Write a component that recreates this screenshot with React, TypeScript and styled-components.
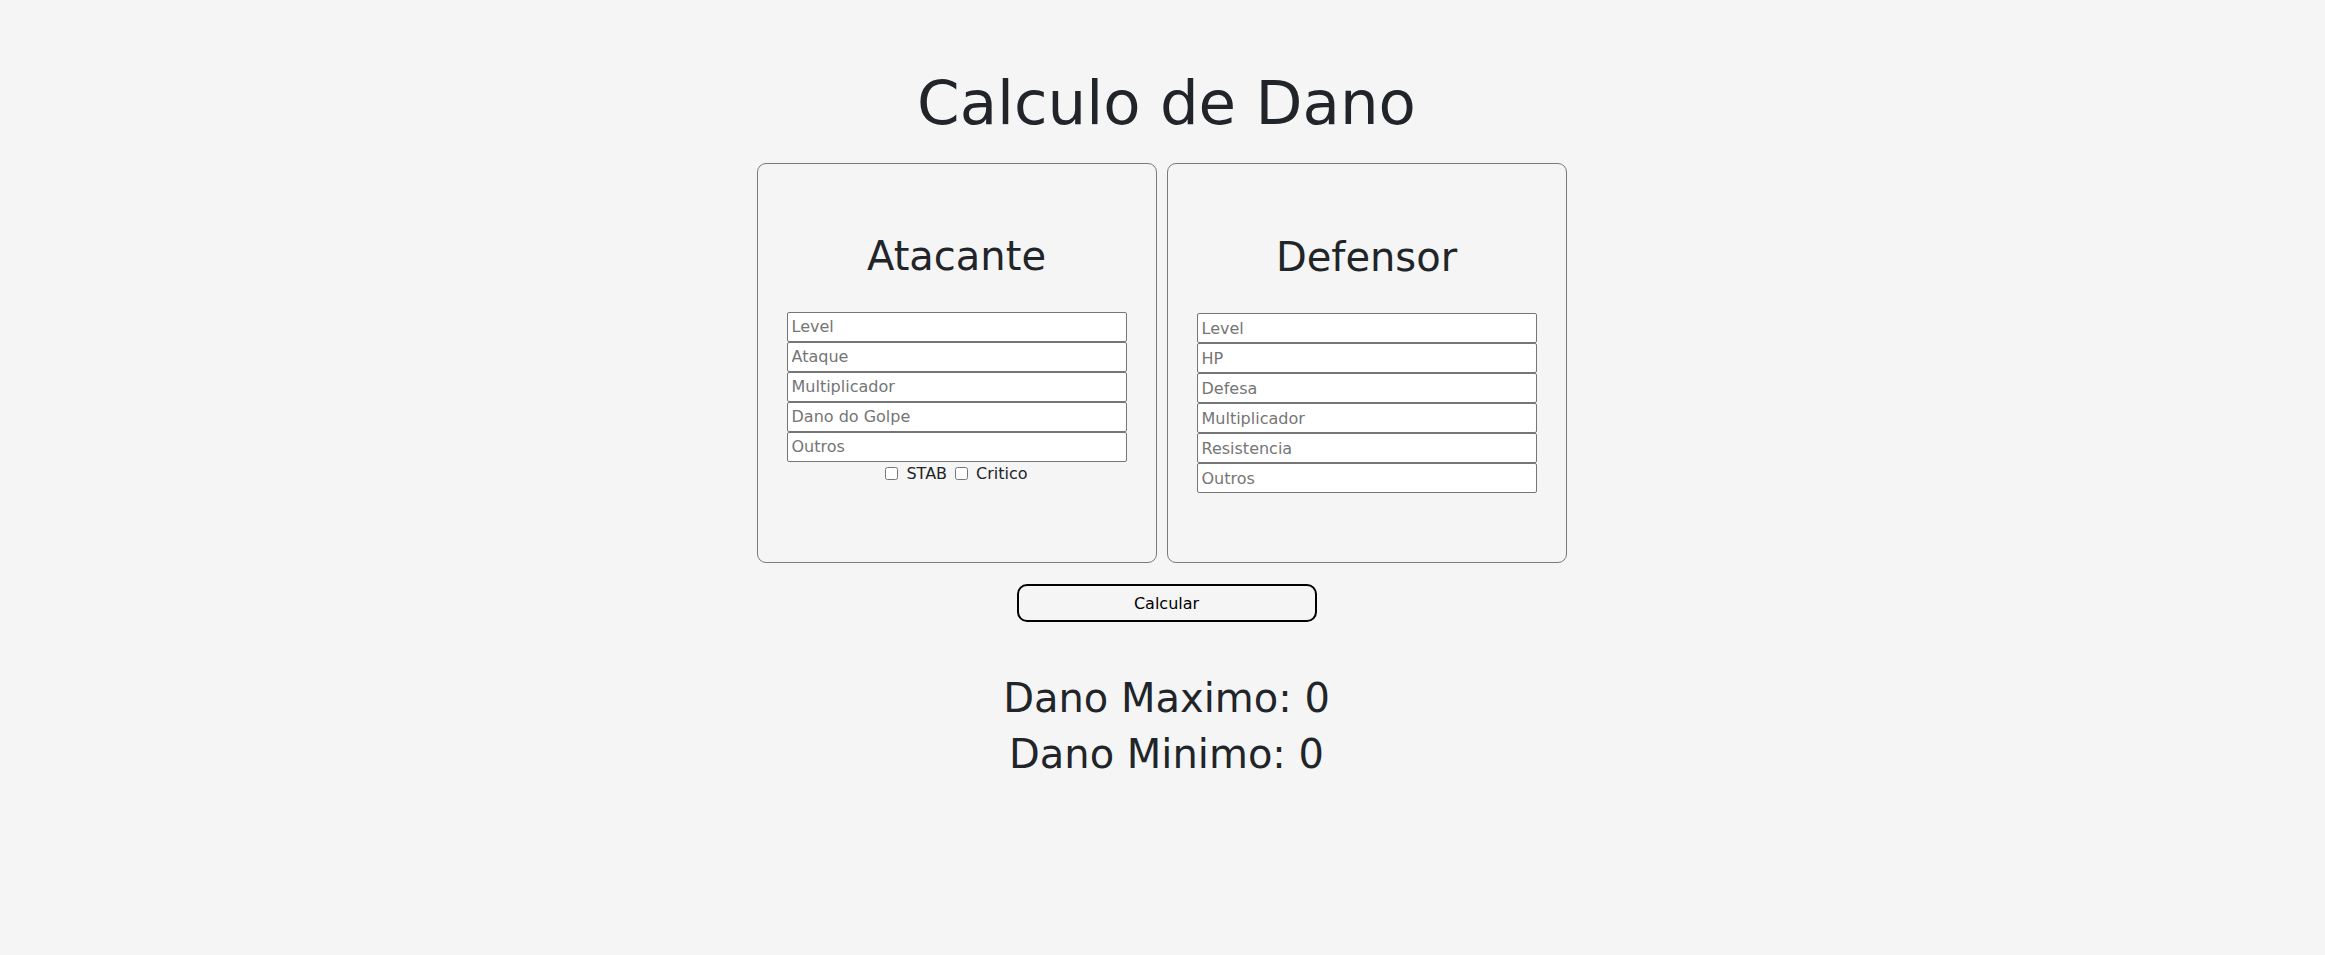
import styled, { createGlobalStyle } from 'styled-components';

const GlobalStyle = createGlobalStyle`
  body {
    margin: 0;
    background-color: #f5f5f5;
    color: #212529;
    font-family: 'DejaVu Sans', 'Liberation Sans', sans-serif;
  }
`;

const atacanteFields = ['Level', 'Ataque', 'Multiplicador', 'Dano do Golpe', 'Outros'];
const defensorFields = ['Level', 'HP', 'Defesa', 'Multiplicador', 'Resistencia', 'Outros'];

const App = () => {
  return (
    <>
      <GlobalStyle />
      <StyledPage>
        <StyledTitle>Calculo de Dano</StyledTitle>
        <StyledCards>
          <StyledCard>
            <StyledCardTitle>Atacante</StyledCardTitle>
            <StyledFields>
              {atacanteFields.map((field) => (
                <StyledInput key={field} type="text" placeholder={field} />
              ))}
            </StyledFields>
            <StyledCheckRow>
              <StyledCheckLabel>
                <StyledCheckbox type="checkbox" />
                STAB
              </StyledCheckLabel>
              <StyledCheckLabel>
                <StyledCheckbox type="checkbox" />
                Critico
              </StyledCheckLabel>
            </StyledCheckRow>
          </StyledCard>
          <StyledCard>
            <StyledCardTitle>Defensor</StyledCardTitle>
            <StyledFields>
              {defensorFields.map((field) => (
                <StyledInput key={field} type="text" placeholder={field} />
              ))}
            </StyledFields>
          </StyledCard>
        </StyledCards>
        <StyledButton type="button">Calcular</StyledButton>
        <StyledResults>
          <StyledResult>Dano Maximo: 0</StyledResult>
          <StyledResult>Dano Minimo: 0</StyledResult>
        </StyledResults>
      </StyledPage>
    </>
  );
};

const StyledPage = styled.main`
  display: flex;
  flex-direction: column;
  align-items: center;
  padding: 67px 0 0 8px;
`;

const StyledTitle = styled.h1`
  margin: 0 0 24px;
  font-size: 61px;
  font-weight: 400;
  line-height: 72px;
`;

const StyledCards = styled.div`
  display: flex;
  gap: 10px;
  margin-right: 10px;
`;

const StyledCard = styled.section`
  box-sizing: border-box;
  width: 400px;
  height: 400px;
  border: 1px solid #7a7a7a;
  border-radius: 9px;
  display: flex;
  flex-direction: column;
  align-items: center;
  justify-content: center;
`;

const StyledCardTitle = styled.h2`
  margin: 0 0 32px;
  font-size: 40px;
  font-weight: 400;
  line-height: 48px;
`;

const StyledFields = styled.div`
  display: flex;
  flex-direction: column;
  width: 340px;
`;

const StyledInput = styled.input`
  box-sizing: border-box;
  width: 100%;
  height: 30px;
  margin: 0;
  padding: 1px 4px;
  border: 1px solid #767676;
  border-radius: 2px;
  background-color: #ffffff;
  font-family: inherit;
  font-size: 16px;
  color: #212529;
  &::placeholder {
    color: #757575;
  }
`;

const StyledCheckRow = styled.div`
  display: flex;
  align-items: center;
  gap: 8px;
  height: 20px;
  margin: 2px 0 11px;
  font-size: 16px;
`;

const StyledCheckLabel = styled.label`
  display: flex;
  align-items: center;
  gap: 8px;
`;

const StyledCheckbox = styled.input`
  width: 13px;
  height: 13px;
  margin: 0;
`;

const StyledButton = styled.button`
  box-sizing: border-box;
  width: 300px;
  height: 38px;
  margin-top: 21px;
  border: 2px solid #000000;
  border-radius: 10px;
  background-color: transparent;
  color: #000000;
  font-family: inherit;
  font-size: 16px;
  cursor: pointer;
`;

const StyledResults = styled.div`
  display: flex;
  flex-direction: column;
  align-items: center;
  margin-top: 48px;
`;

const StyledResult = styled.h2`
  margin: 0;
  font-size: 40px;
  font-weight: 400;
  line-height: 56px;
`;

export default App;
